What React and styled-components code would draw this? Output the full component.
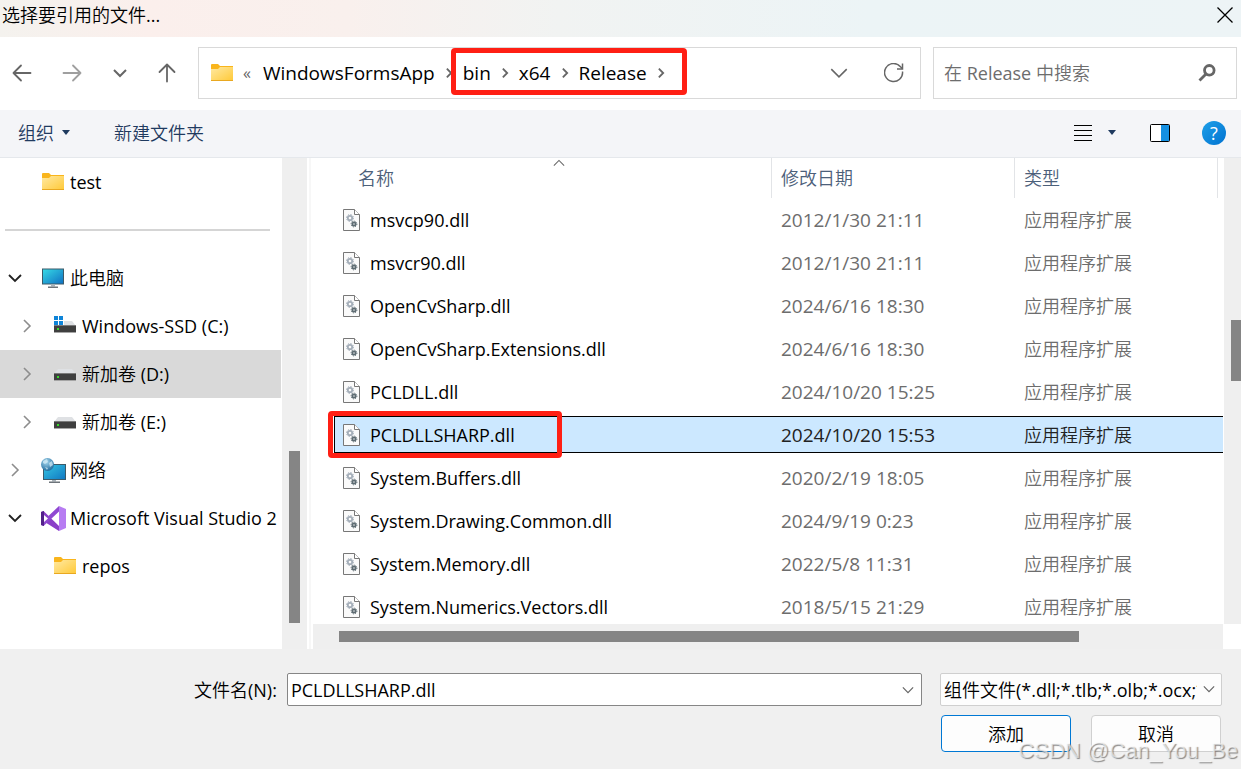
import React from 'react';
import styled, { createGlobalStyle } from 'styled-components';

const Colours = {
    text: '#000000',
    muted: '#6d6d6d',
    toolbar: '#1f3a5f',
    header: '#4c607a',
    line: '#d9d9d9',
    track: '#efefef',
    thumb: '#858585',
    selected: '#cce8ff',
    mark: '#ff1f14',
    accent: '#0078d4',
};

const tree = [
    { icon: 'folder', label: 'test', level: 1 },
    { separator: true },
    { icon: 'pc', label: '此电脑', level: 1, arrow: 'down' },
    { icon: 'system', label: 'Windows-SSD (C:)', level: 2, arrow: 'right' },
    { icon: 'drive', label: '新加卷 (D:)', level: 2, arrow: 'right', active: true },
    { icon: 'drive', label: '新加卷 (E:)', level: 2, arrow: 'right' },
    { icon: 'network', label: '网络', level: 1, arrow: 'right' },
    { icon: 'vs', label: 'Microsoft Visual Studio 2', level: 1, arrow: 'down' },
    { icon: 'folder', label: 'repos', level: 2 },
];

const files = [
    { name: 'msvcp90.dll', date: '2012/1/30 21:11' },
    { name: 'msvcr90.dll', date: '2012/1/30 21:11' },
    { name: 'OpenCvSharp.dll', date: '2024/6/16 18:30' },
    { name: 'OpenCvSharp.Extensions.dll', date: '2024/6/16 18:30' },
    { name: 'PCLDLL.dll', date: '2024/10/20 15:25' },
    { name: 'PCLDLLSHARP.dll', date: '2024/10/20 15:53', selected: true },
    { name: 'System.Buffers.dll', date: '2020/2/19 18:05' },
    { name: 'System.Drawing.Common.dll', date: '2024/9/19 0:23' },
    { name: 'System.Memory.dll', date: '2022/5/8 11:31' },
    { name: 'System.Numerics.Vectors.dll', date: '2018/5/15 21:29' },
];

const Chevron = ({ direction = 'down', size = 14, colour = '#666', weight = 1.5 }) => {
    const paths = {
        down: 'M1 4 L7 10 L13 4',
        up: 'M1 10 L7 4 L13 10',
        right: 'M4 1 L10 7 L4 13',
    };
    return (
        <svg width={size} height={size} viewBox="0 0 14 14" fill="none" stroke={colour} strokeWidth={weight}>
            <path d={paths[direction]} />
        </svg>
    );
};

const NavArrow = ({ direction, colour = '#666' }) => {
    const turn = { left: 0, up: 90, right: 180 }[direction];
    return (
        <svg width="20" height="20" viewBox="0 0 20 20" fill="none" stroke={colour} strokeWidth="1.8" strokeLinecap="round" strokeLinejoin="round">
            <g transform={`rotate(${turn} 10 10)`}>
                <path d="M1.5 10 H18.5 M9 2.5 L1.5 10 L9 17.5" />
            </g>
        </svg>
    );
};

const CaretIcon = () => (
    <svg width="8" height="5" viewBox="0 0 8 5"><path d="M0 0 H8 L4 5 Z" fill={Colours.toolbar} /></svg>
);

const FolderIcon = () => (
    <svg width="22" height="18" viewBox="0 0 22 18">
        <defs>
            <linearGradient id="folder" x1="0" y1="0" x2="1" y2="1">
                <stop offset="0" stopColor="#ffe9a2" />
                <stop offset="1" stopColor="#ffc937" />
            </linearGradient>
        </defs>
        <path d="M0 1 Q0 0 1 0 H7 L9 2 H22 V6 H0 Z" fill="#f9b51c" />
        <path d="M0 5 H7 L9 3 H22 V17 H0 Z" fill="url(#folder)" />
        <path d="M0 16.5 H22" stroke="#e9a820" />
    </svg>
);

const PcIcon = () => (
    <svg width="22" height="20" viewBox="0 0 22 20">
        <defs>
            <linearGradient id="screen" x1="0" y1="0" x2="1" y2="1">
                <stop offset="0" stopColor="#36dbe6" />
                <stop offset="1" stopColor="#0f6fc2" />
            </linearGradient>
        </defs>
        <rect x="0.5" y="1" width="21" height="15" fill="url(#screen)" stroke="#3c5a68" />
        <rect x="9" y="16.5" width="4" height="2" fill="#a9b3ba" />
        <rect x="6" y="18.5" width="10" height="1.5" fill="#6d747a" />
    </svg>
);

const DriveIcon = ({ system }) => (
    <svg width="22" height="20" viewBox="0 0 22 20">
        <path d="M4 5 H18 L22 10 H0 Z" fill="#dfe1e4" />
        <rect y="9" width="22" height="8" fill="#3f3f3f" />
        <rect y="9" width="22" height="1" fill="#7b7b7b" />
        <rect y="16" width="22" height="1" fill="#a5a5a5" />
        <rect x="3" y="12" width="2" height="2" fill="#37d92b" />
        {system && (
            <>
                <rect width="10" height="9" fill="#fff" />
                <path d="M0 0 H4 V4 H0 Z M5 0 H9 V4 H5 Z M0 5 H4 V9 H0 Z M5 5 H9 V9 H5 Z" fill="#0e84d8" />
            </>
        )}
    </svg>
);

const NetworkIcon = () => (
    <svg width="25" height="25" viewBox="0 0 25 25">
        <defs>
            <linearGradient id="net" x1="0" y1="0" x2="1" y2="1">
                <stop offset="0" stopColor="#36c6e2" />
                <stop offset="1" stopColor="#0f77c2" />
            </linearGradient>
            <radialGradient id="globe" cx="0.4" cy="0.3" r="0.7">
                <stop offset="0" stopColor="#a7d8ef" />
                <stop offset="1" stopColor="#226d9f" />
            </radialGradient>
        </defs>
        <rect x="2.5" y="6.5" width="22" height="15" fill="url(#net)" stroke="#3c5a68" />
        <rect x="11" y="22" width="4" height="1.5" fill="#a9b3ba" />
        <rect x="8" y="23.5" width="11" height="1.5" fill="#6d747a" />
        <circle cx="6.5" cy="6.5" r="6.5" fill="url(#globe)" />
        <path d="M2 3 L6 1 L7 4 L4 6 L2 5 Z M8 5 L11 3 L12 7 L9 9 Z M4 9 L7 10 L6 12 Z" fill="#d9eef7" opacity="0.7" />
    </svg>
);

const VsIcon = () => (
    <svg width="25" height="25" viewBox="0 0 25 25">
        <path d="M0 6 L2.5 5 L18 20 V25 L3 15.5 L0 19 Z" fill="#8a3fc8" />
        <path d="M0 19 L2.5 20 L18 5.5 V0 L9 8.5 L3 14 V11 L0 6 Z" fill="#8f48d1" />
        <path d="M0 6 L3 5 V20 L0 19 Z" fill="#52218a" />
        <path d="M3 9 L7 12.5 L3 16 Z M12 12.5 L18 7.5 V17.5 Z" fill="#fff" />
        <path d="M18 0 L25 3 V22 L18 25 Z" fill="#b77cf2" />
    </svg>
);

const Gear = ({ x, y, r, colour }) => (
    <g transform={`translate(${x} ${y})`} stroke={colour} fill="none">
        <circle r={r} strokeWidth="1.8" />
        <circle r={r + 1.3} strokeWidth="1" strokeDasharray={`${(r + 1.3) * 0.3927} ${(r + 1.3) * 0.3927}`} />
    </g>
);

const DllIcon = () => (
    <svg width="17" height="22" viewBox="0 0 17 22">
        <path d="M0.5 0.5 H11.5 L16.5 5.5 V21.5 H0.5 Z" fill="#fafafa" stroke="#777" />
        <path d="M11.5 0.5 V5.5 H16.5" fill="#fff" stroke="#777" />
        <Gear x={7} y={9} r={2.2} colour="#a3adb8" />
        <Gear x={11} y={15} r={1.6} colour="#5d6b72" />
    </svg>
);

const RefreshIcon = () => (
    <svg width="20" height="20" viewBox="0 0 20 20" fill="none" stroke="#666" strokeWidth="1.5">
        <path d="M18.5 8.5 A9 9 0 1 1 16.5 3.8 L18.5 5.8" />
        <path d="M18.5 0.5 V6 H13" />
    </svg>
);

const SearchIcon = () => (
    <svg width="18" height="18" viewBox="0 0 18 18" fill="none" stroke="#666">
        <circle cx="11.3" cy="6.3" r="4.8" strokeWidth="2.8" />
        <path d="M8 10 L1.5 16.5" strokeWidth="2.8" />
    </svg>
);

const ListIcon = () => (
    <svg width="18" height="18" viewBox="0 0 18 18" stroke="#000">
        <path d="M0 1.5 H18 M0 6.5 H18 M0 11.5 H18 M0 16.5 H18" />
    </svg>
);

const PaneIcon = () => (
    <svg width="20" height="18" viewBox="0 0 20 18">
        <rect x="0.5" y="0.5" width="19" height="17" rx="1" fill="#fff" stroke="#000" />
        <rect x="11" y="1" width="8" height="16" fill="#1590e2" />
    </svg>
);

const icons = {
    folder: <FolderIcon />,
    pc: <PcIcon />,
    system: <DriveIcon system />,
    drive: <DriveIcon />,
    network: <NetworkIcon />,
    vs: <VsIcon />,
};

export default function App() {
    return (
        <Dialog>
            <GlobalStyle />
            <TitleBar>
                <Title>选择要引用的文件...</Title>
                <IconButton aria-label="关闭">
                    <svg width="16" height="16" viewBox="0 0 16 16" stroke="#000" strokeWidth="1.3"><path d="M0.5 0.5 L15.5 15.5 M15.5 0.5 L0.5 15.5" /></svg>
                </IconButton>
            </TitleBar>

            <NavBar>
                <NavButtons>
                    <IconButton aria-label="后退"><NavArrow direction="left" /></IconButton>
                    <IconButton aria-label="前进"><NavArrow direction="right" colour="#9f9f9f" /></IconButton>
                    <IconButton aria-label="最近的位置"><Chevron colour="#666" weight={2} /></IconButton>
                    <IconButton aria-label="向上"><NavArrow direction="up" /></IconButton>
                </NavButtons>
                <AddressBar>
                    <FolderIcon />
                    <Overflow>«</Overflow>
                    <Crumb href="#app">WindowsFormsApp</Crumb>
                    <CrumbArrow><Chevron direction="right" size={10} weight={2.6} /></CrumbArrow>
                    <MarkedCrumbs>
                        <Crumb href="#bin">bin</Crumb>
                        <CrumbArrow><Chevron direction="right" size={10} weight={2.6} /></CrumbArrow>
                        <Crumb href="#x64">x64</Crumb>
                        <CrumbArrow><Chevron direction="right" size={10} weight={2.6} /></CrumbArrow>
                        <Crumb href="#release">Release</Crumb>
                        <CrumbArrow><Chevron direction="right" size={10} weight={2.6} /></CrumbArrow>
                    </MarkedCrumbs>
                    <AddressActions>
                        <IconButton aria-label="展开地址"><Chevron size={18} weight={1.2} /></IconButton>
                        <IconButton aria-label="刷新"><RefreshIcon /></IconButton>
                    </AddressActions>
                </AddressBar>
                <SearchBox>
                    <SearchInput aria-label="搜索" placeholder="在 Release 中搜索" />
                    <SearchIcon />
                </SearchBox>
            </NavBar>

            <Toolbar>
                <ToolButton>组织 <CaretIcon /></ToolButton>
                <ToolButton>新建文件夹</ToolButton>
                <ViewTools>
                    <ViewButtons>
                        <IconButton aria-label="视图"><ListIcon /></IconButton>
                        <IconButton aria-label="更多选项"><CaretIcon /></IconButton>
                    </ViewButtons>
                    <IconButton aria-label="预览窗格"><PaneIcon /></IconButton>
                    <HelpButton aria-label="帮助">?</HelpButton>
                </ViewTools>
            </Toolbar>

            <Content>
                <Sidebar>
                    {tree.map((item, i) => item.separator ? (
                        <Separator key={i} />
                    ) : (
                        <TreeItem key={i} $level={item.level} $active={item.active}>
                            <TreeArrow>
                                {item.arrow && (
                                    <Chevron
                                        direction={item.arrow}
                                        colour={item.arrow === 'down' ? '#222' : '#8d8d8d'}
                                        weight={item.arrow === 'down' ? 1.8 : 1.6}
                                    />
                                )}
                            </TreeArrow>
                            <TreeIcon>{icons[item.icon]}</TreeIcon>
                            {item.label}
                        </TreeItem>
                    ))}
                </Sidebar>
                <SideTrack><SideThumb /></SideTrack>
                <Splitter />
                <Main>
                    <ListArea>
                        <FileList>
                            <FileTable>
                                <colgroup>
                                    <col />
                                    <DateCol />
                                    <TypeCol />
                                    <EndCol />
                                </colgroup>
                                <thead>
                                    <tr>
                                        <HeadCell $first>
                                            名称
                                            <SortMark><Chevron direction="up" size={12} weight={1.2} /></SortMark>
                                        </HeadCell>
                                        <HeadCell>修改日期</HeadCell>
                                        <HeadCell>类型</HeadCell>
                                        <EndCell />
                                    </tr>
                                </thead>
                                <tbody>
                                    {files.map(({ name, date, selected }) => (
                                        <tr key={name}>
                                            <Cell>
                                                <NameBox $selected={selected}>
                                                    <DllIcon />
                                                    {name}
                                                    {selected && <FileMark />}
                                                </NameBox>
                                            </Cell>
                                            <Cell><DateBox $selected={selected}>{date}</DateBox></Cell>
                                            <Cell><CellBox $selected={selected}>应用程序扩展</CellBox></Cell>
                                            <Cell><CellBox $selected={selected} /></Cell>
                                        </tr>
                                    ))}
                                </tbody>
                            </FileTable>
                        </FileList>
                        <ListTrack><ListThumb /></ListTrack>
                    </ListArea>
                    <BottomScroll>
                        <BottomTrack><BottomThumb /></BottomTrack>
                    </BottomScroll>
                </Main>
            </Content>

            <Footer>
                <FooterRow>
                    <label htmlFor="filename">文件名(N):</label>
                    <FileNameBox>
                        <FileNameInput id="filename" defaultValue="PCLDLLSHARP.dll" />
                        <IconButton aria-label="历史文件名"><Chevron size={12} weight={1.4} /></IconButton>
                    </FileNameBox>
                    <TypeBox>
                        <TypeSelect aria-label="文件类型">
                            <option>组件文件(*.dll;*.tlb;*.olb;*.ocx;*.exe)</option>
                        </TypeSelect>
                        <SelectArrow><Chevron size={12} weight={1.4} /></SelectArrow>
                    </TypeBox>
                </FooterRow>
                <ButtonRow>
                    <DialogButton $primary>添加</DialogButton>
                    <DialogButton>取消</DialogButton>
                </ButtonRow>
                <Watermark>CSDN @Can_You_Be</Watermark>
            </Footer>
        </Dialog>
    );
}

const GlobalStyle = createGlobalStyle`
* {
  box-sizing: border-box;
}
body {
  margin: 0;
}
body, button, input, select {
  font-family: 'Open Sans', 'Noto Sans CJK SC DemiLight', 'Noto Sans CJK SC Light', 'Noto Sans CJK SC', sans-serif;
  font-size: 18px;
  line-height: 24px;
  color: ${Colours.text};
}
svg {
  display: block;
  flex-shrink: 0;
}
`

const Dialog = styled.div`
display: flex;
flex-direction: column;
height: 100vh;
background: #fff;
overflow: hidden;
`

const TitleBar = styled.header`
display: flex;
align-items: center;
justify-content: space-between;
height: 37px;
padding: 0 8px 8px 2px;
background: linear-gradient(90deg, #f4f2ee 0%, #fbefec 12%, #f9f0ed 28%, #f1f3f2 45%, #ecf4f6 70%, #edf4f6 100%);
`

const Title = styled.h1`
margin: 0;
font-size: 18px;
font-weight: 400;
`

const IconButton = styled.button`
display: flex;
align-items: center;
justify-content: center;
padding: 0;
border: 0;
background: none;
`

const NavBar = styled.nav`
display: flex;
align-items: center;
height: 73px;
padding: 0 4px 2px 0;
`

const NavButtons = styled.div`
display: flex;
justify-content: space-between;
width: 198px;
padding: 0 21px 0 12px;
`

const AddressBar = styled.div`
display: flex;
align-items: center;
flex: 1;
height: 52px;
padding: 0 16px 0 12px;
border: 1px solid ${Colours.line};
`

const Overflow = styled.span`
width: 30px;
padding-left: 10px;
font-size: 16px;
color: #666;
`

const Crumb = styled.a`
color: ${Colours.text};
font-size: 19px;
text-decoration: none;
`

const CrumbArrow = styled.span`
display: flex;
justify-content: center;
width: 28px;
`

const MarkedCrumbs = styled.div`
position: relative;
display: flex;
align-items: center;
&::after {
  content: '';
  position: absolute;
  inset: -13px -12px -10px -12px;
  border: 5px solid ${Colours.mark};
  border-radius: 4px;
  pointer-events: none;
}
`

const AddressActions = styled.div`
display: flex;
align-items: center;
gap: 36px;
margin-left: auto;
`

const SearchBox = styled.div`
display: flex;
align-items: center;
width: 304px;
height: 52px;
margin-left: 12px;
padding: 0 20px 0 10px;
border: 1px solid ${Colours.line};
`

const SearchInput = styled.input`
flex: 1;
min-width: 0;
padding: 0;
border: 0;
outline: 0;
&::placeholder {
  color: ${Colours.muted};
}
`

const Toolbar = styled.div`
display: flex;
align-items: center;
gap: 44px;
height: 48px;
padding: 0 15px 2px 18px;
background: #f4f5f8;
border-bottom: 1px solid #e5e8ec;
`

const ToolButton = styled.button`
display: flex;
align-items: center;
gap: 8px;
padding: 0;
border: 0;
background: none;
color: ${Colours.toolbar};
`

const ViewTools = styled.div`
display: flex;
align-items: center;
gap: 32px;
margin-left: auto;
`

const ViewButtons = styled.div`
display: flex;
gap: 16px;
padding-right: 2px;
`

const HelpButton = styled.button`
width: 24px;
height: 24px;
padding: 0;
border: 0;
border-radius: 50%;
background: linear-gradient(135deg, #1fa0e8, #0072d0);
color: #fff;
`

const Content = styled.div`
display: flex;
flex: 1;
min-height: 0;
`

const Sidebar = styled.aside`
width: 282px;
padding-right: 1px;
overflow: hidden;
`

const TreeItem = styled.div`
display: flex;
align-items: center;
height: 48px;
padding-left: ${({ $level }) => ($level === 2 ? 20 : 8)}px;
background: ${({ $active }) => ($active ? '#d9d9d9' : 'transparent')};
white-space: nowrap;
`

const TreeArrow = styled.span`
flex-shrink: 0;
width: 32px;
`

const TreeIcon = styled.span`
display: flex;
flex-shrink: 0;
justify-content: center;
width: 26px;
margin-right: 4px;
`

const Separator = styled.hr`
height: 2px;
margin: 23px 11px 23px 5px;
border: 0;
background: #d5d5d5;
`

const SideTrack = styled.div`
display: flex;
align-items: flex-end;
justify-content: center;
width: 25px;
padding-bottom: 26px;
background: ${Colours.track};
`

const SideThumb = styled.div`
width: 11px;
height: 37%;
background: ${Colours.thumb};
`

const Splitter = styled.div`
width: 6px;
border: solid #fff;
border-width: 0 2px;
background: #f7f7f7;
`

const Main = styled.main`
display: flex;
flex: 1;
flex-direction: column;
min-width: 0;
`

const ListArea = styled.div`
display: flex;
flex: 1;
min-height: 0;
`

const FileList = styled.div`
flex: 1;
padding-left: 21px;
overflow: hidden;
`

const FileTable = styled.table`
width: 100%;
table-layout: fixed;
border-collapse: collapse;
`

const DateCol = styled.col`
width: 243px;
`

const TypeCol = styled.col`
width: 203px;
`

const EndCol = styled.col`
width: 5px;
`

const HeadCell = styled.th`
position: relative;
height: 40px;
padding: 0 0 0 ${({ $first }) => ($first ? 24 : 9)}px;
box-shadow: inset -1px 0 #e2e4e7;
color: ${Colours.header};
font-weight: 400;
text-align: left;
`

const EndCell = styled.td`
padding: 0;
`

const SortMark = styled.span`
position: absolute;
top: -1px;
left: 50%;
`

const Cell = styled.td`
padding: 3px 0;
`

const CellBox = styled.div`
display: flex;
align-items: center;
height: 37px;
padding-left: 9px;
border: solid ${({ $selected }) => ($selected ? '#000' : 'transparent')};
border-width: 1px 0;
background: ${({ $selected }) => ($selected ? Colours.selected : 'transparent')};
color: ${({ $selected }) => ($selected ? '#222' : Colours.muted)};
white-space: nowrap;
`

const DateBox = styled(CellBox)`
font-size: 19px;
`

const NameBox = styled(CellBox)`
position: relative;
gap: 10px;
padding-left: 8px;
border-left-width: 1px;
color: ${Colours.text};
`

const FileMark = styled.span`
position: absolute;
top: -6px;
left: -7px;
width: 234px;
height: 47px;
border: 5px solid ${Colours.mark};
border-radius: 4px;
`

const ListTrack = styled.div`
width: 18px;
padding: 162px 0 0 7px;
border-left: 1px solid #fff;
background: ${Colours.track};
`

const ListThumb = styled.div`
height: 61px;
background: ${Colours.thumb};
`

const BottomScroll = styled.div`
padding-right: 18px;
`

const BottomTrack = styled.div`
height: 25px;
padding: 7px 144px 7px 26px;
background: ${Colours.track};
`

const BottomThumb = styled.div`
height: 11px;
background: ${Colours.thumb};
`

const Footer = styled.footer`
position: relative;
display: flex;
flex-direction: column;
gap: 9px;
padding: 24px 19px 17px;
background: #f0f0f0;
`

const FooterRow = styled.div`
display: flex;
align-items: center;
justify-content: flex-end;
gap: 18px;

label {
  margin: 0 -8px 0 175px;
  white-space: nowrap;
}
`

const ButtonRow = styled(FooterRow)`
gap: 20px;
padding-right: 1px;
`

const FileNameBox = styled.div`
display: flex;
flex: 1;
height: 33px;
padding-right: 7px;
border: 1px solid #868686;
border-radius: 2px;
background: #fff;
`

const FileNameInput = styled.input`
flex: 1;
min-width: 0;
padding: 0 3px;
border: 0;
outline: 0;
background: none;
`

const TypeBox = styled.div`
position: relative;
width: 282px;
`

const TypeSelect = styled.select`
appearance: none;
width: 100%;
height: 33px;
padding: 0 24px 0 3px;
border: 1px solid #cfcfcf;
border-radius: 2px;
background: #fdfdfd;
`

const SelectArrow = styled.span`
position: absolute;
top: 10px;
right: 7px;
pointer-events: none;
`

const DialogButton = styled.button`
width: 130px;
height: 37px;
padding: 0;
border: 1px solid ${({ $primary }) => ($primary ? Colours.accent : '#d0d0d0')};
border-radius: 4px;
background: #fdfdfd;
`

const Watermark = styled.span`
position: absolute;
right: 3px;
bottom: 6px;
font-family: 'Liberation Sans', sans-serif;
font-size: 22px;
color: rgba(255, 255, 255, 0.6);
text-shadow: 1px 1px 1px rgba(90, 90, 90, 0.7);
pointer-events: none;
`
